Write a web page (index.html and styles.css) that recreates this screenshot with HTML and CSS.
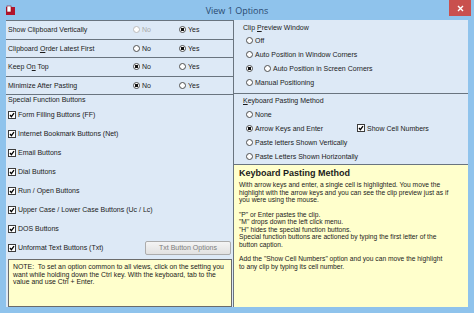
FILE: index.html
```html
<!DOCTYPE html>
<html lang="en">
<head>
    <meta charset="UTF-8">
    <title>View 1 Options</title>
    <link rel="stylesheet" href="styles.css">
</head>
<body>

<div class="window">
    <!-- Title bar -->
    <div class="titlebar">
        <svg class="app-icon" width="11" height="11" viewBox="0 0 11 11">
            <rect x="1" y="2" width="9" height="8" fill="#b3132b"/>
            <rect x="2" y="1" width="4" height="6" fill="#ffffff"/>
            <rect x="2" y="1" width="4" height="6" fill="none" stroke="#8a0d1f" stroke-width="0.6"/>
        </svg>
        <span class="title">View 1 Options</span>
        <span class="close">
            <svg width="7" height="7" viewBox="0 0 7 7"><path d="M1 1 L6 6 M6 1 L1 6" stroke="#fff" stroke-width="1.4"/></svg>
        </span>
    </div>

    <div class="content">
        <!-- Left column -->
        <div class="col-left">
            <div class="opt-row">
                <span>Show Clipboard Vertically</span>
                <span class="radio disabled"><i class="dot"></i>No</span>
                <span class="radio"><i class="dot on"></i>Yes</span>
            </div>
            <div class="opt-row">
                <span>Clipboard <u>O</u>rder Latest First</span>
                <span class="radio"><i class="dot"></i>No</span>
                <span class="radio"><i class="dot on"></i>Yes</span>
            </div>
            <div class="opt-row">
                <span>Keep O<u>n</u> Top</span>
                <span class="radio"><i class="dot on"></i>No</span>
                <span class="radio"><i class="dot"></i>Yes</span>
            </div>
            <div class="opt-row">
                <span>Minimize After Pasting</span>
                <span class="radio"><i class="dot on"></i>No</span>
                <span class="radio"><i class="dot"></i>Yes</span>
            </div>

            <div class="special">
                <div class="group-title">Special Function Buttons</div>
                <div class="check-row"><i class="box"></i>Form Filling Buttons (FF)</div>
                <div class="check-row"><i class="box"></i>Internet Bookmark Buttons (Net)</div>
                <div class="check-row"><i class="box"></i>Email Buttons</div>
                <div class="check-row"><i class="box"></i>Dial Buttons</div>
                <div class="check-row"><i class="box"></i>Run / Open Buttons</div>
                <div class="check-row"><i class="box"></i>Upper Case / Lower Case Buttons (Uc / Lc)</div>
                <div class="check-row"><i class="box"></i>DOS Buttons</div>
                <div class="check-row">
                    <i class="box"></i>Unformat Text Buttons (Txt)
                    <button class="txt-btn">Txt Button Options</button>
                </div>
            </div>

            <div class="note">
                NOTE:&nbsp; To set an option common to all views, click on the setting you<br>
                want while holding down the Ctrl key. With the keyboard, tab to the<br>
                value and use Ctrl + Enter.
            </div>
        </div>

        <!-- Right column -->
        <div class="col-right">
            <div class="clip">
                <div class="group-title">Clip <u>P</u>review Window</div>
                <div class="radio-row"><span class="radio"><i class="dot"></i>Off</span></div>
                <div class="radio-row"><span class="radio"><i class="dot"></i>Auto Position in Window Corners</span></div>
                <div class="radio-row">
                    <i class="dot on"></i>
                    <span class="radio second"><i class="dot"></i>Auto Position in Screen Corners</span>
                </div>
                <div class="radio-row"><span class="radio"><i class="dot"></i>Manual Positioning</span></div>
            </div>

            <div class="keyboard">
                <div class="group-title"><u>K</u>eyboard Pasting Method</div>
                <div class="radio-row"><span class="radio"><i class="dot"></i>None</span></div>
                <div class="radio-row split">
                    <span class="radio"><i class="dot on"></i>Arrow Keys and Enter</span>
                    <span class="check"><i class="box"></i>Show Cell Numbers</span>
                </div>
                <div class="radio-row"><span class="radio"><i class="dot"></i>Paste letters Shown Vertically</span></div>
                <div class="radio-row"><span class="radio"><i class="dot"></i>Paste Letters Shown Horizontally</span></div>
            </div>

            <div class="help">
                <h3>Keyboard Pasting Method</h3>
                <p>With arrow keys and enter, a single cell is highlighted. You move the<br>
                highlight with the arrow keys and you can see the clip preview just as if<br>
                you were using the mouse.</p>
                <p>"P" or Enter pastes the clip.<br>
                "M" drops down the left click menu.<br>
                "H" hides the special function buttons.<br>
                Special function buttons are actioned by typing the first letter of the<br>
                button caption.</p>
                <p>Add the "Show Cell Numbers" option and you can move the highlight<br>
                to any clip by typing its cell number.</p>
            </div>
        </div>
    </div>
</div>

</body>
</html>
```

FILE: styles.css
```css
body {
    margin: 0;
    font-family: "Liberation Sans", Arial, sans-serif;
    font-size: 7px;
    color: #1b1b1b;
}

.window {
    width: 474px;
    height: 313px;
    background-color: #8fc3ec;
    display: flex;
    flex-direction: column;
}

/* Title bar */
.titlebar {
    height: 20px;
    display: grid;
    grid-template-columns: 1fr auto 1fr;
    align-items: center;
}

.app-icon {
    margin-left: 5px;
}

.title {
    font-family: "Open Sans", "Liberation Sans", sans-serif;
    font-size: 9px;
    color: #2a4a70;
}

.close {
    justify-self: end;
    align-self: start;
    width: 22px;
    height: 16px;
    margin-right: 3px;
    background-color: #c9504e;
    display: flex;
    align-items: center;
    justify-content: center;
}

/* Main area */
.content {
    flex: 1;
    margin: 0 6px 6px;
    display: flex;
    background-color: #dde9f6;
}

.col-left {
    width: 227px;
    border-right: 1px solid #69747f;
    display: flex;
    flex-direction: column;
}

.col-right {
    flex: 1;
    display: flex;
    flex-direction: column;
}

u {
    text-decoration-thickness: 0.5px;
    text-underline-offset: 1px;
}

.opt-row {
    height: 17.5px;
    border-top: 1px solid #69747f;
    padding-left: 2px;
    display: grid;
    grid-template-columns: 125px 46px auto;
    align-items: center;
}

/* Radio buttons and check boxes */
.radio {
    display: inline-flex;
    align-items: center;
    gap: 2px;
}

.dot {
    width: 7px;
    height: 7px;
    box-sizing: border-box;
    border: 1px solid #4f4f4f;
    border-radius: 50%;
    background-color: #fff;
    flex-shrink: 0;
}

.dot.on {
    background: radial-gradient(circle, #111 0 1.5px, #fff 2px);
}

.radio.disabled {
    color: #a9a9a9;
}

.radio.disabled .dot {
    border-color: #bcbcbc;
}

.box {
    width: 8px;
    height: 8px;
    box-sizing: border-box;
    border: 1px solid #3c3c3c;
    background: #fff url("data:image/svg+xml;utf8,<svg xmlns='http://www.w3.org/2000/svg' viewBox='0 0 6 6'><path d='M1 3 L2.4 4.6 L5 1.2' fill='none' stroke='black' stroke-width='1.3'/></svg>") center / 6px 6px no-repeat;
    flex-shrink: 0;
}

.group-title {
    height: 10px;
    line-height: 10px;
}

/* Special function buttons */
.special {
    border-top: 1px solid #69747f;
    padding-left: 2px;
}

.check-row {
    height: 19px;
    display: flex;
    align-items: center;
    gap: 2px;
}

.txt-btn {
    margin-left: auto;
    margin-right: 2px;
    width: 86px;
    height: 14px;
    padding: 0;
    border: 1px solid #acacac;
    border-radius: 2px;
    background: linear-gradient(#f4f4f4, #e1e1e1);
    color: #7d7d7d;
    font-family: inherit;
    font-size: 7px;
}

.note {
    flex: 1;
    margin: 2px 1px 0 2px;
    padding: 3px 4px;
    border: 1px solid #6b6b6b;
    background-color: #ffffcc;
    font-size: 6.9px;
    line-height: 7.6px;
    white-space: nowrap;
}

/* Right column groups */
.clip {
    padding: 3px 0 4px 9px;
    border-bottom: 1px solid #69747f;
}

.keyboard {
    padding: 1px 0 1px 9px;
    border-bottom: 1px solid #69747f;
}

.keyboard .group-title {
    height: 12px;
    line-height: 12px;
}

.radio-row {
    height: 14px;
    padding-left: 3px;
    display: flex;
    align-items: center;
}

.radio-row .radio.second {
    margin-left: 11px;
}

.radio-row.split .radio {
    width: 111px;
}

.check {
    display: inline-flex;
    align-items: center;
    gap: 2px;
}

.help {
    flex: 1;
    padding: 3px 5px;
    background-color: #ffffcc;
}

.help h3 {
    margin: 0;
    font-size: 9px;
    line-height: 10px;
}

.help p {
    margin: 3px 0 7px;
    font-size: 6.7px;
    line-height: 7.5px;
    white-space: nowrap;
}
```
